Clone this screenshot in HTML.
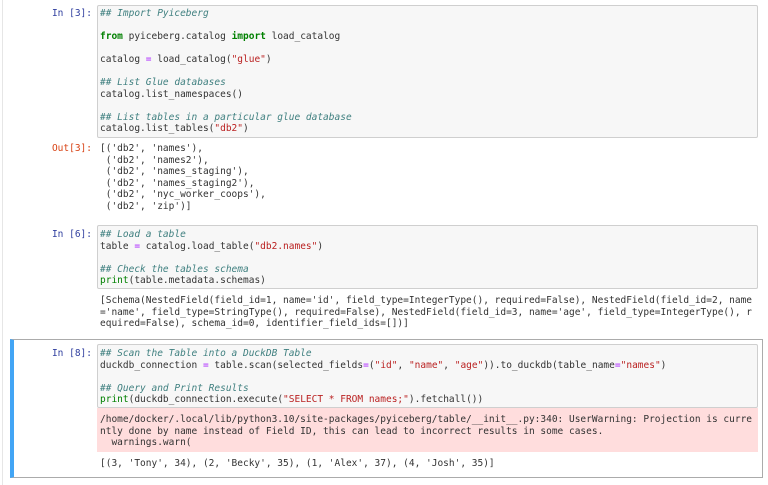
<!DOCTYPE html>
<html><head><meta charset="utf-8"><style>
body{margin:0;width:768px;height:485px;background:#fff;position:relative;overflow:hidden;font-family:"DejaVu Sans Mono","Liberation Mono",monospace;font-size:9.5px;color:#333}
.lb{position:absolute;left:2px;top:0;width:1px;height:485px;background:#e6e6e6}
.box{position:absolute;left:97px;width:661px;background:#f7f7f7;border:1px solid #cfcfcf;border-radius:2px;box-sizing:border-box}
pre{margin:0;position:absolute;font:inherit;line-height:11.5px;white-space:pre}
.p{position:absolute;right:676px;text-align:right;line-height:11.5px;white-space:pre}
.in{color:#303F9F}.out{color:#D84315}
.c{color:#408080;font-style:italic}.k{color:#008000;font-weight:bold}.s{color:#BA2121}.o{color:#AA22FF}.b{color:#008000}
</style></head><body>
<div class="lb"></div>

<div class="box" style="top:5px;height:133px"></div>
<div class="p in" style="top:8px">In [3]:</div>
<pre style="left:100px;top:8px"><span class="c">## Import Pyiceberg</span>

<span class="k">from</span> pyiceberg.catalog <span class="k">import</span> load_catalog

catalog <span class="o">=</span> load_catalog(<span class="s">"glue"</span>)

<span class="c">## List Glue databases</span>
catalog.list_namespaces()

<span class="c">## List tables in a particular glue database</span>
catalog.list_tables(<span class="s">"db2"</span>)</pre>
<div class="p out" style="top:143px">Out[3]:</div>
<pre style="left:100px;top:143px">[('db2', 'names'),
 ('db2', 'names2'),
 ('db2', 'names_staging'),
 ('db2', 'names_staging2'),
 ('db2', 'nyc_worker_coops'),
 ('db2', 'zip')]</pre>

<div class="box" style="top:225px;height:64px"></div>
<div class="p in" style="top:229px">In [6]:</div>
<pre style="left:100px;top:229px"><span class="c">## Load a table</span>
table <span class="o">=</span> catalog.load_table(<span class="s">"db2.names"</span>)

<span class="c">## Check the tables schema</span>
<span class="b">print</span>(table.metadata.schemas)</pre>
<pre style="left:100px;top:295px">[Schema(NestedField(field_id=1, name='id', field_type=IntegerType(), required=False), NestedField(field_id=2, name
='name', field_type=StringType(), required=False), NestedField(field_id=3, name='age', field_type=IntegerType(), r
equired=False), schema_id=0, identifier_field_ids=[])]</pre>

<div style="position:absolute;left:10px;top:339px;width:753px;height:139px;border:1px solid #ababab;box-sizing:border-box;border-left:4px solid #42A5F5"></div>
<div class="box" style="top:344px;height:64px"></div>
<div style="position:absolute;left:97px;top:408px;width:661px;height:44px;background:#fdd"></div>
<div class="p in" style="top:348px">In [8]:</div>
<pre style="left:100px;top:348px"><span class="c">## Scan the Table into a DuckDB Table</span>
duckdb_connection <span class="o">=</span> table.scan(selected_fields<span class="o">=</span>(<span class="s">"id"</span>, <span class="s">"name"</span>, <span class="s">"age"</span>)).to_duckdb(table_name<span class="o">=</span><span class="s">"names"</span>)

<span class="c">## Query and Print Results</span>
<span class="b">print</span>(duckdb_connection.execute(<span class="s">"SELECT * FROM names;"</span>).fetchall())</pre>
<pre style="left:100px;top:414px">/home/docker/.local/lib/python3.10/site-packages/pyiceberg/table/__init__.py:340: UserWarning: Projection is curre
ntly done by name instead of Field ID, this can lead to incorrect results in some cases.
  warnings.warn(</pre>
<pre style="left:100px;top:458px">[(3, 'Tony', 34), (2, 'Becky', 35), (1, 'Alex', 37), (4, 'Josh', 35)]</pre>
</body></html>
